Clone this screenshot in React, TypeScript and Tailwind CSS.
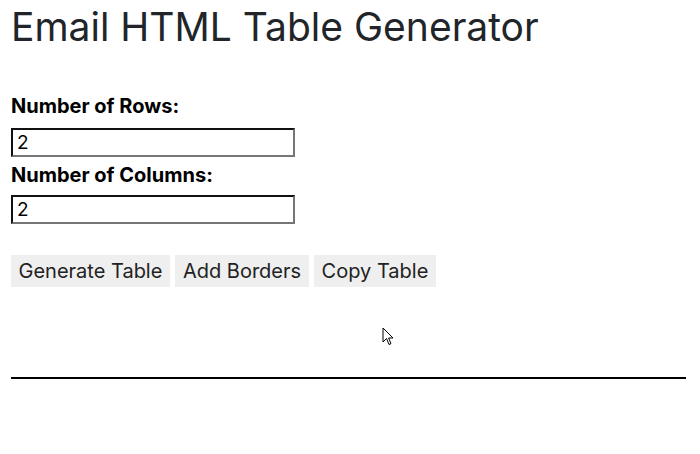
import { useState } from "react";

const font = { fontFamily: "Inter, 'Noto Sans', sans-serif" };

export default function App() {
  const [rows, setRows] = useState("2");
  const [cols, setCols] = useState("2");

  return (
    <div className="relative h-[454px] w-[700px] bg-white pl-[11px] pr-[14px]" style={font}>
      <h1 className="pt-[3px] text-[39px] leading-[48px] font-normal text-[#212529]">
        Email HTML Table Generator
      </h1>

      <div className="mt-[43px] flex flex-col">
        <label className="text-[20px] leading-[24px] font-bold text-black">Number of Rows:</label>
        <input
          value={rows}
          onChange={(e) => setRows(e.target.value)}
          className="mt-[10px] h-[29px] w-[284px] border-2 border-t-[#111] border-l-[#111] border-b-[#767676] border-r-[#767676] px-[4px] text-[19px] text-black outline-none"
        />
        <label className="mt-[6px] text-[20px] leading-[24px] font-bold text-black">Number of Columns:</label>
        <input
          value={cols}
          onChange={(e) => setCols(e.target.value)}
          className="mt-[8px] h-[29px] w-[284px] border-2 border-t-[#111] border-l-[#111] border-b-[#767676] border-r-[#767676] px-[4px] text-[19px] text-black outline-none"
        />
      </div>

      <div className="mt-[31px] flex gap-[5.5px]">
        <button className="h-[32px] bg-[#efefef] px-[7.5px] text-[20px] text-[#222]">Generate Table</button>
        <button className="h-[32px] bg-[#efefef] px-[7.5px] text-[20px] text-[#222]">Add Borders</button>
        <button className="h-[32px] bg-[#efefef] px-[7.5px] text-[20px] text-[#222]">Copy Table</button>
      </div>

      <div className="mt-[90px] h-[2px] w-[675px] bg-black" />

      <svg className="absolute left-[382px] top-[327px]" width="13" height="20" viewBox="0 0 13 20">
        <path d="M1 1 L1 15 L4.5 11.5 L7 17.5 L9 16.6 L6.6 11 L11 11 Z" fill="white" stroke="black" strokeWidth="1" strokeLinejoin="round" />
      </svg>
    </div>
  );
}
